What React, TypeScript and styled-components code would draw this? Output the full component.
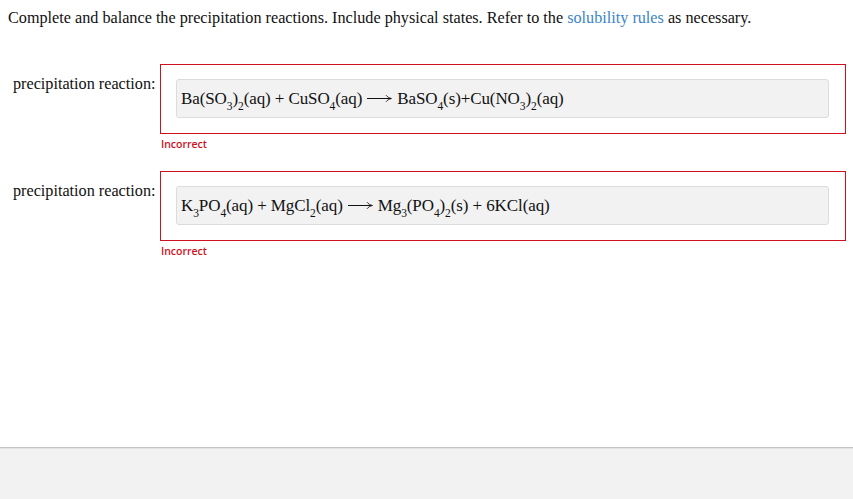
import React from 'react'
import styled, { createGlobalStyle } from 'styled-components'

const Global = createGlobalStyle`
  html, body { margin: 0; padding: 0; background: #fff; }
  body { font-family: "Liberation Serif", "Times New Roman", serif; color: #111; }
`

const Page = styled.div`
  min-height: 100vh;
  display: flex;
  flex-direction: column;
`

const Main = styled.main`
  flex: 1;
  padding: 8px 7px 0 8px;
`

const Prompt = styled.p`
  margin: 0;
  font-size: 16.2px;
  line-height: 20px;
  a {
    color: #3a85c6;
    text-decoration: none;
  }
`

const Question = styled.section<{ first?: boolean }>`
  margin-top: ${({ first }) => (first ? '36px' : '20px')};
  display: flex;
`

const Label = styled.div`
  width: 152px;
  padding: 10px 0 0 5px;
  box-sizing: border-box;
  font-size: 16.2px;
  line-height: 20px;
`

const Body = styled.div`
  flex: 1;
`

const AnswerBox = styled.div<{ wrong?: boolean }>`
  border: 1px solid ${({ wrong }) => (wrong ? '#d0101e' : '#ccc')};
  padding: 14px 16px 15px 15px;
`

const Equation = styled.div`
  background: #f2f2f2;
  border: 1px solid #dcdcdc;
  border-radius: 3px;
  height: 37px;
  display: flex;
  align-items: center;
  padding: 0 4px;
  font-size: 17px;
  letter-spacing: -0.1px;
  white-space: nowrap;
`

const Sub = styled.sub`
  font-size: 11.5px;
  vertical-align: -6px;
  line-height: 0;
`

const ArrowIcon = styled.svg`
  display: inline-block;
  width: 25px;
  height: 9px;
  margin: 0 5px;
  vertical-align: 1px;
`

const Arrow: React.FC = () => (
  <ArrowIcon viewBox="0 0 25 9">
    <path d="M0 4.5H23.5" stroke="#111" strokeWidth="1" fill="none" />
    <path d="M19 1.2C20.5 3 22 4 24.5 4.5C22 5 20.5 6 19 7.8" stroke="#111" strokeWidth="0.9" fill="none" />
  </ArrowIcon>
)

type Part = string | { s: string }

const Formula: React.FC<{ parts: Part[] }> = ({ parts }) => (
  <span>
    {parts.map((p, i) =>
      typeof p === 'string' ? (
        p === '->' ? <Arrow key={i} /> : <span key={i}>{p}</span>
      ) : (
        <Sub key={i}>{p.s}</Sub>
      )
    )}
  </span>
)

const Feedback = styled.div`
  font-family: "Open Sans", "Liberation Sans", sans-serif;
  font-size: 10.5px;
  font-weight: 600;
  color: #d0101e;
  line-height: 14px;
  margin: 3px 0 0 1px;
`

const Footer = styled.footer`
  height: 51px;
  border-top: 1px solid #c4c4c4;
  box-shadow: inset 0 1px 0 #e2e2e2;
  background: #f2f2f2;
`

const questions: Part[][] = [
  [
    'Ba(SO', { s: '3' }, ')', { s: '2' }, '(aq) + CuSO', { s: '4' }, '(aq)', '->',
    'BaSO', { s: '4' }, '(s)+Cu(NO', { s: '3' }, ')', { s: '2' }, '(aq)',
  ],
  [
    'K', { s: '3' }, 'PO', { s: '4' }, '(aq) + MgCl', { s: '2' }, '(aq)', '->',
    'Mg', { s: '3' }, '(PO', { s: '4' }, ')', { s: '2' }, '(s) + 6KCl(aq)',
  ],
]

export default function App() {
  return (
    <Page>
      <Global />
      <Main>
        <Prompt>
          Complete and balance the precipitation reactions. Include physical states. Refer to the{' '}
          <a href="#">solubility rules</a> as necessary.
        </Prompt>
        {questions.map((q, i) => (
          <Question key={i} first={i === 0}>
            <Label>precipitation reaction:</Label>
            <Body>
              <AnswerBox wrong>
                <Equation>
                  <Formula parts={q} />
                </Equation>
              </AnswerBox>
              <Feedback>Incorrect</Feedback>
            </Body>
          </Question>
        ))}
      </Main>
      <Footer />
    </Page>
  )
}
